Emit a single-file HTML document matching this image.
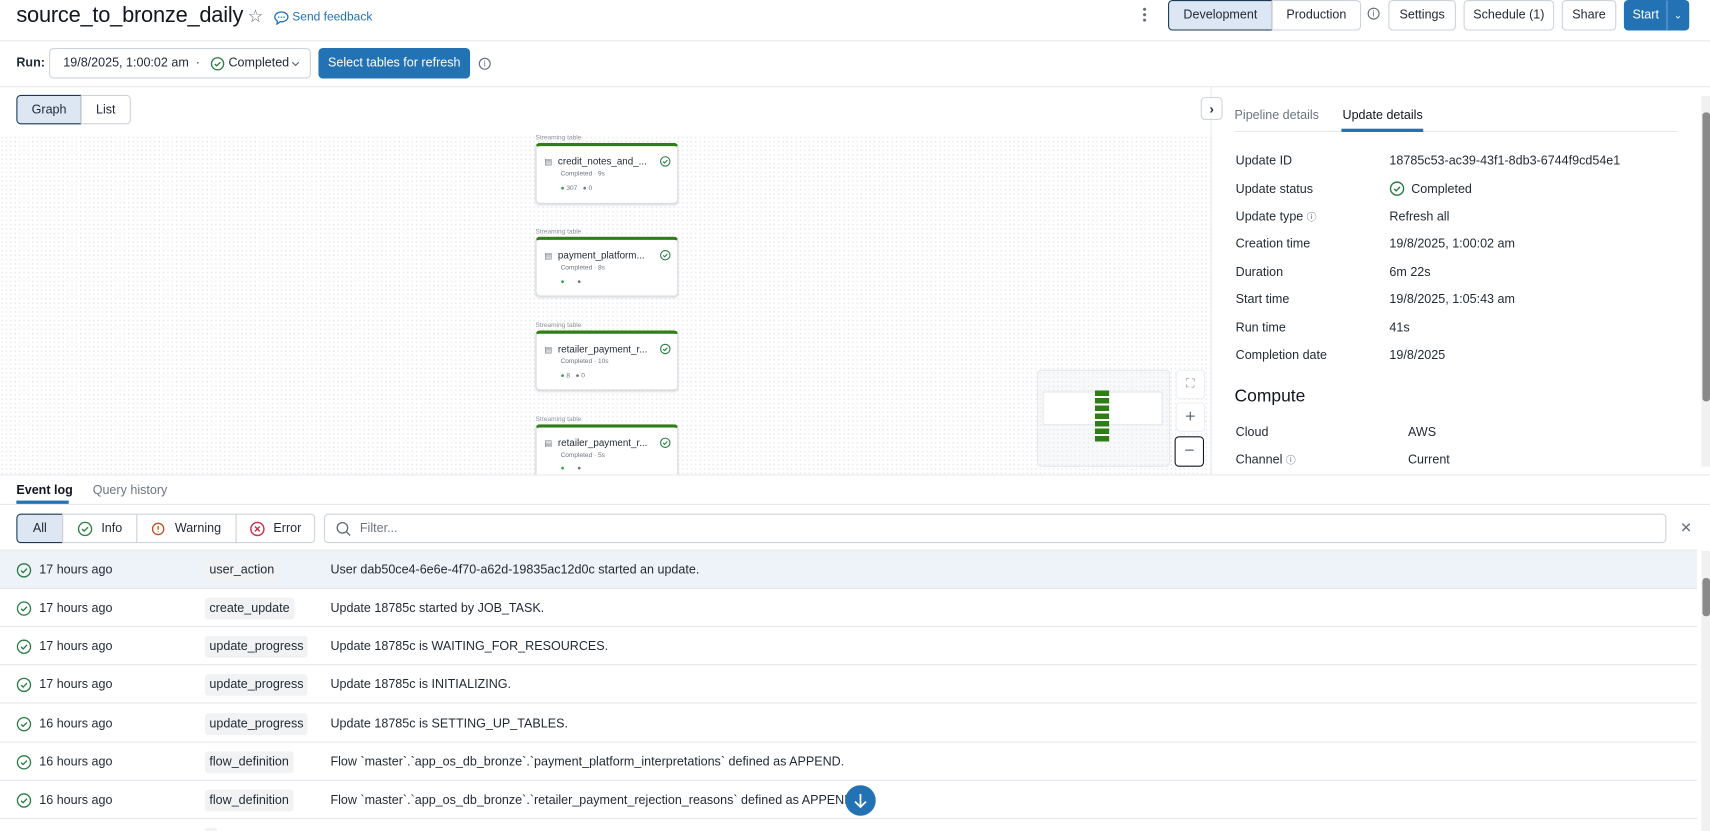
<!DOCTYPE html>
<html><head><meta charset="utf-8"><style>
*{box-sizing:border-box;margin:0;padding:0}
html,body{width:1710px;height:831px;overflow:hidden;background:#fff}
#w{width:1568px;height:762px;transform:scale(1.0906);transform-origin:0 0;position:relative;font-family:"Liberation Sans",sans-serif;font-size:11.5px;color:#1f2933}
.a{position:absolute}
.btn{position:absolute;border:1px solid #cdd3da;border-radius:4px;background:#fff;display:flex;align-items:center;justify-content:center;font-size:11.5px;color:#1f2933}
.hl{position:absolute;left:0;right:0;height:1px;background:#e6e9ed}
.dot{background-image:radial-gradient(#e3e6ea 0.6px,transparent 0.7px);background-size:4px 4px}
.card{position:absolute;left:491px;width:131px;background:#fff;border:1px solid #d6dbe0;border-top:3px solid #2e7d16;border-radius:4px;box-shadow:0 1px 2px rgba(0,0,0,.12)}
.st{position:absolute;left:491px;font-size:6px;color:#8a939c}
.lbl{position:absolute;left:1133px;font-size:11.5px;color:#1f2933;line-height:14px;margin-top:1px}
.val{position:absolute;left:1274px;font-size:11.5px;color:#1f2933;line-height:14px;margin-top:1px}
.row{position:absolute;left:0;width:1556px;height:35px;border-bottom:1px solid #e3e7ec}
.row .t{position:absolute;left:36px;top:11px;line-height:14px}
.row .g{position:absolute;left:188px;top:8px;background:#f1f2f4;padding:3px 4px;border-radius:3px;line-height:14px}
.row .m{position:absolute;left:303px;top:11px;line-height:14px}
.row svg{position:absolute;left:15px;top:11px}
.nc{position:absolute;left:106px;top:1px}
</style></head><body><div id="w">
<div class="a" style="left:15px;top:3px;font-size:20px;letter-spacing:-0.2px;color:#11171c">source_to_bronze_daily</div>
<div class="a" style="left:227px;top:5px;font-size:16px;color:#5f6b76">☆</div>
<svg class="a" style="left:251px;top:10px" width="14" height="13" viewBox="0 0 14 13"><path d="M7 1C3.7 1 1 3 1 5.6c0 1.5.9 2.8 2.3 3.6L3 12l3-2.1c.3 0 .7.1 1 .1 3.3 0 6-2 6-4.5S10.3 1 7 1z" fill="none" stroke="#2272b4" stroke-width="1.2"/><circle cx="4.6" cy="5.7" r=".7" fill="#2272b4"/><circle cx="7" cy="5.7" r=".7" fill="#2272b4"/><circle cx="9.4" cy="5.7" r=".7" fill="#2272b4"/></svg>
<div class="a" style="left:268px;top:10px;font-size:11px;color:#2272b4">Send feedback</div>
<div class="a" style="left:1048px;top:6px;width:3px;height:14px;background:radial-gradient(circle,#5f6b76 1.3px,transparent 1.5px) 0 0/3px 5px"></div>
<div class="btn" style="left:1071px;top:0;width:96px;height:28px;background:#dce7f3;border-color:#1b3a57;border-radius:4px 0 0 4px">Development</div>
<div class="btn" style="left:1166px;top:0;width:82px;height:28px;border-radius:0 4px 4px 0">Production</div>
<div class="a" style="left:1254px;top:7px;width:11px;height:11px;border:1px solid #5f6b76;border-radius:50%;font-size:8px;text-align:center;line-height:9px;color:#5f6b76">i</div>
<div class="btn" style="left:1273px;top:0;width:62px;height:28px">Settings</div>
<div class="btn" style="left:1342px;top:0;width:83px;height:28px">Schedule (1)</div>
<div class="btn" style="left:1432px;top:0;width:50px;height:28px">Share</div>
<div class="btn" style="left:1489px;top:0;width:40px;height:28px;background:#2272b4;border-color:#2272b4;color:#fff;border-radius:4px 0 0 4px">Start</div>
<div class="btn" style="left:1528px;top:0;width:21px;height:28px;background:#2272b4;border-color:#2272b4;border-left:1px solid #7aa7d2;color:#fff;border-radius:0 4px 4px 0;font-size:9px">⌄</div>
<div class="hl" style="top:37px"></div>
<div class="a" style="left:15px;top:52px;font-weight:bold;font-size:11.5px">Run:</div>
<div class="btn" style="left:45px;top:44px;width:240px;height:28px;justify-content:flex-start;padding-left:12px">19/8/2025, 1:00:02 am &nbsp;·&nbsp;
<svg width="13" height="13" viewBox="0 0 14 14" style="margin:0 4px 0 6px"><circle cx="7" cy="7" r="6" fill="none" stroke="#277c43" stroke-width="1.3"/><path d="M4.3 7.2l1.9 1.8 3.5-3.6" fill="none" stroke="#277c43" stroke-width="1.3"/></svg>Completed<svg style="position:absolute;right:9px;top:11px" width="8" height="5" viewBox="0 0 8 5"><path d="M1 1l3 3 3-3" fill="none" stroke="#5f6b76" stroke-width="1.1"/></svg></div>
<div class="btn" style="left:292px;top:44px;width:139px;height:28px;background:#2272b4;border-color:#2272b4;color:#fff">Select tables for refresh</div>
<div class="a" style="left:439px;top:53px;width:11px;height:11px;border:1px solid #5f6b76;border-radius:50%;font-size:8px;text-align:center;line-height:9px;color:#5f6b76">i</div>
<div class="hl" style="top:79px"></div>
<div class="a dot" style="left:0;top:124px;width:1110px;height:311px"></div>
<div class="btn" style="left:15px;top:87px;width:60px;height:27px;background:#dce7f3;border-color:#1b3a57;border-radius:4px 0 0 4px">Graph</div>
<div class="btn" style="left:74px;top:87px;width:46px;height:27px;border-radius:0 4px 4px 0">List</div>
<div class="a" style="left:1110px;top:79px;width:1px;height:356px;background:#e6e9ed"></div>
<div class="st" style="top:124px">Streaming table</div>
<div class="card" style="top:131px;height:56px"></div>
<div class="st" style="top:210px">Streaming table</div>
<div class="card" style="top:217px;height:55px"></div>
<div class="st" style="top:296px">Streaming table</div>
<div class="card" style="top:303px;height:55px"></div>
<div class="st" style="top:382px">Streaming table</div>
<div class="card" style="top:389px;height:50px;border-bottom:none"></div>
<div class="a" style="left:0;top:435px;width:1110px;height:6px;background:#fff"></div>
<div class="a" style="left:499px;top:142px;width:120px;font-size:9px;line-height:12px"><span style="color:#6b7580;font-size:8px">▤</span>&nbsp; credit_notes_and_...<svg class="nc" width="10" height="10" viewBox="0 0 14 14"><circle cx="7" cy="7" r="6" fill="none" stroke="#277c43" stroke-width="1.4"/><path d="M4.3 7.2l1.9 1.8 3.5-3.6" fill="none" stroke="#277c43" stroke-width="1.4"/></svg></div>
<div class="a" style="left:514px;top:157px;font-size:6px;color:#6b7580">Completed · 9s</div>
<div class="a" style="left:514px;top:170px;font-size:6px;color:#6b7580"><span style="color:#2f9e44">●</span> 307 &nbsp; <span style="color:#6b7580">●</span> 0</div>
<div class="a" style="left:499px;top:228px;width:120px;font-size:9px;line-height:12px"><span style="color:#6b7580;font-size:8px">▤</span>&nbsp; payment_platform...<svg class="nc" width="10" height="10" viewBox="0 0 14 14"><circle cx="7" cy="7" r="6" fill="none" stroke="#277c43" stroke-width="1.4"/><path d="M4.3 7.2l1.9 1.8 3.5-3.6" fill="none" stroke="#277c43" stroke-width="1.4"/></svg></div>
<div class="a" style="left:514px;top:243px;font-size:6px;color:#6b7580">Completed · 8s</div>
<div class="a" style="left:514px;top:256px;font-size:6px;color:#6b7580"><span style="color:#2f9e44">●</span> &nbsp; &nbsp; &nbsp; <span>●</span></div>
<div class="a" style="left:499px;top:314px;width:120px;font-size:9px;line-height:12px"><span style="color:#6b7580;font-size:8px">▤</span>&nbsp; retailer_payment_r...<svg class="nc" width="10" height="10" viewBox="0 0 14 14"><circle cx="7" cy="7" r="6" fill="none" stroke="#277c43" stroke-width="1.4"/><path d="M4.3 7.2l1.9 1.8 3.5-3.6" fill="none" stroke="#277c43" stroke-width="1.4"/></svg></div>
<div class="a" style="left:514px;top:329px;font-size:6px;color:#6b7580">Completed · 10s</div>
<div class="a" style="left:514px;top:342px;font-size:6px;color:#6b7580"><span style="color:#2f9e44">●</span> 8 &nbsp; <span>●</span> 0</div>
<div class="a" style="left:499px;top:400px;width:120px;font-size:9px;line-height:12px"><span style="color:#6b7580;font-size:8px">▤</span>&nbsp; retailer_payment_r...<svg class="nc" width="10" height="10" viewBox="0 0 14 14"><circle cx="7" cy="7" r="6" fill="none" stroke="#277c43" stroke-width="1.4"/><path d="M4.3 7.2l1.9 1.8 3.5-3.6" fill="none" stroke="#277c43" stroke-width="1.4"/></svg></div>
<div class="a" style="left:514px;top:415px;font-size:6px;color:#6b7580">Completed · 5s</div>
<div class="a" style="left:514px;top:427px;font-size:6px;color:#6b7580"><span style="color:#2f9e44">●</span> &nbsp; &nbsp; &nbsp; <span>●</span></div>
<div class="a dot" style="left:951px;top:339px;width:122px;height:89px;border:1px solid #e3e6ea;border-radius:4px;background-color:#f8f9fa"></div>
<div class="a" style="left:956px;top:359px;width:110px;height:31px;border:1px solid #e3e6ea;background:#fff"></div>
<div class="a" style="left:1004px;top:358px;width:13px;height:48px;background:repeating-linear-gradient(#2e7d16 0 5px,transparent 5px 7px)"></div>
<div class="btn" style="left:1078px;top:339px;width:27px;height:27px;border-color:#eceff2;color:#8a939c;font-size:11px">⛶</div>
<div class="btn" style="left:1078px;top:369px;width:27px;height:27px;border-color:#eceff2;color:#5f6b76;font-size:16px">+</div>
<div class="btn" style="left:1077px;top:400px;width:27px;height:28px;border:1.5px solid #11171c;color:#5f6b76;font-size:16px">−</div>
<div class="btn" style="left:1101px;top:89px;width:20px;height:21px;font-weight:bold;font-size:12px">›</div>
<div class="a" style="left:1132px;top:100px;color:#6b7580">Pipeline details</div>
<div class="a" style="left:1231px;top:100px;color:#11171c">Update details</div>
<div class="a" style="left:1132px;top:120px;width:406px;height:1px;background:#e6e9ed"></div>
<div class="a" style="left:1230px;top:118px;width:75px;height:3px;background:#2272b4"></div>
<div class="lbl" style="top:140px">Update ID</div><div class="val" style="top:140px">18785c53-ac39-43f1-8db3-6744f9cd54e1</div>
<div class="lbl" style="top:166px">Update status</div><div class="val" style="top:165px"><svg width="14" height="14" viewBox="0 0 14 14" style="vertical-align:-3px;margin-right:6px"><circle cx="7" cy="7" r="6" fill="none" stroke="#277c43" stroke-width="1.3"/><path d="M4.3 7.2l1.9 1.8 3.5-3.6" fill="none" stroke="#277c43" stroke-width="1.3"/></svg>Completed</div>
<div class="lbl" style="top:191px">Update type <span style="font-size:9px;color:#5f6b76">ⓘ</span></div><div class="val" style="top:191px">Refresh all</div>
<div class="lbl" style="top:216px">Creation time</div><div class="val" style="top:216px">19/8/2025, 1:00:02 am</div>
<div class="lbl" style="top:242px">Duration</div><div class="val" style="top:242px">6m 22s</div>
<div class="lbl" style="top:267px">Start time</div><div class="val" style="top:267px">19/8/2025, 1:05:43 am</div>
<div class="lbl" style="top:293px">Run time</div><div class="val" style="top:293px">41s</div>
<div class="lbl" style="top:318px">Completion date</div><div class="val" style="top:318px">19/8/2025</div>
<div class="a" style="left:1132px;top:355px;font-size:16px;color:#11171c">Compute</div>
<div class="lbl" style="top:389px">Cloud</div><div class="val" style="left:1291px;top:389px">AWS</div>
<div class="lbl" style="top:414px">Channel <span style="font-size:9px;color:#5f6b76">ⓘ</span></div><div class="val" style="left:1291px;top:414px">Current</div>
<div class="a" style="left:1560px;top:88px;width:8px;height:340px;background:#f1f1f1"></div>
<div class="a" style="left:1561px;top:103px;width:7px;height:265px;background:#8a8a8a;border-radius:3px"></div>
<div class="hl" style="top:435px"></div>
<div class="a" style="left:15px;top:444px;font-weight:bold;color:#11171c">Event log</div>
<div class="a" style="left:85px;top:444px;color:#6b7580">Query history</div>
<div class="hl" style="top:462px"></div>
<div class="a" style="left:15px;top:459px;width:48px;height:3px;background:#2272b4"></div>
<div class="btn" style="left:15px;top:471px;width:43px;height:27px;background:#dce7f3;border-color:#1b3a57;border-radius:4px 0 0 4px">All</div>
<div class="btn" style="left:57px;top:471px;width:69px;height:27px;border-radius:0"><svg width="14" height="14" viewBox="0 0 14 14" style="margin-right:8px"><circle cx="7" cy="7" r="6" fill="none" stroke="#277c43" stroke-width="1.2"/><path d="M4.3 7.2l1.9 1.8 3.5-3.6" fill="none" stroke="#277c43" stroke-width="1.2"/></svg>Info</div>
<div class="btn" style="left:125px;top:471px;width:92px;height:27px;border-radius:0"><svg width="12" height="12" viewBox="0 0 14 14" style="margin-right:9px"><circle cx="7" cy="7" r="6" fill="none" stroke="#be501e" stroke-width="1.4"/><path d="M7 3.8v4M7 9.6v.8" stroke="#be501e" stroke-width="1.4"/></svg>Warning</div>
<div class="btn" style="left:216px;top:471px;width:73px;height:27px;border-radius:0 4px 4px 0"><svg width="14" height="14" viewBox="0 0 14 14" style="margin-right:8px"><circle cx="7" cy="7" r="6" fill="none" stroke="#c82d4c" stroke-width="1.3"/><path d="M4.8 4.8l4.4 4.4M9.2 4.8l-4.4 4.4" stroke="#c82d4c" stroke-width="1.3"/></svg>Error</div>
<div class="btn" style="left:297px;top:471px;width:1231px;height:27px;justify-content:flex-start;padding-left:10px;color:#6b7580"><svg width="14" height="14" viewBox="0 0 14 14" style="margin-right:8px"><circle cx="6" cy="6" r="4.8" fill="none" stroke="#5f6b76" stroke-width="1.2"/><path d="M9.5 9.5l3.5 3.5" stroke="#5f6b76" stroke-width="1.2"/></svg>Filter...</div>
<div class="a" style="left:1541px;top:474px;font-size:17px;color:#5f6b76">×</div>
<div class="a" style="left:0;top:504px;width:1556px;height:1px;background:#e3e7ec"></div>
<div class="row" style="top:505px;background:#eef2f9"><svg width="14" height="14" viewBox="0 0 14 14"><circle cx="7" cy="7" r="6" fill="none" stroke="#277c43" stroke-width="1.2"/><path d="M4.3 7.2l1.9 1.8 3.5-3.6" fill="none" stroke="#277c43" stroke-width="1.2"/></svg><span class="t">17 hours ago</span><span class="g">user_action</span><span class="m">User dab50ce4-6e6e-4f70-a62d-19835ac12d0c started an update.</span></div>
<div class="row" style="top:540px"><svg width="14" height="14" viewBox="0 0 14 14"><circle cx="7" cy="7" r="6" fill="none" stroke="#277c43" stroke-width="1.2"/><path d="M4.3 7.2l1.9 1.8 3.5-3.6" fill="none" stroke="#277c43" stroke-width="1.2"/></svg><span class="t">17 hours ago</span><span class="g">create_update</span><span class="m">Update 18785c started by JOB_TASK.</span></div>
<div class="row" style="top:575px"><svg width="14" height="14" viewBox="0 0 14 14"><circle cx="7" cy="7" r="6" fill="none" stroke="#277c43" stroke-width="1.2"/><path d="M4.3 7.2l1.9 1.8 3.5-3.6" fill="none" stroke="#277c43" stroke-width="1.2"/></svg><span class="t">17 hours ago</span><span class="g">update_progress</span><span class="m">Update 18785c is WAITING_FOR_RESOURCES.</span></div>
<div class="row" style="top:610px"><svg width="14" height="14" viewBox="0 0 14 14"><circle cx="7" cy="7" r="6" fill="none" stroke="#277c43" stroke-width="1.2"/><path d="M4.3 7.2l1.9 1.8 3.5-3.6" fill="none" stroke="#277c43" stroke-width="1.2"/></svg><span class="t">17 hours ago</span><span class="g">update_progress</span><span class="m">Update 18785c is INITIALIZING.</span></div>
<div class="row" style="top:646px"><svg width="14" height="14" viewBox="0 0 14 14"><circle cx="7" cy="7" r="6" fill="none" stroke="#277c43" stroke-width="1.2"/><path d="M4.3 7.2l1.9 1.8 3.5-3.6" fill="none" stroke="#277c43" stroke-width="1.2"/></svg><span class="t">16 hours ago</span><span class="g">update_progress</span><span class="m">Update 18785c is SETTING_UP_TABLES.</span></div>
<div class="row" style="top:681px"><svg width="14" height="14" viewBox="0 0 14 14"><circle cx="7" cy="7" r="6" fill="none" stroke="#277c43" stroke-width="1.2"/><path d="M4.3 7.2l1.9 1.8 3.5-3.6" fill="none" stroke="#277c43" stroke-width="1.2"/></svg><span class="t">16 hours ago</span><span class="g">flow_definition</span><span class="m">Flow `master`.`app_os_db_bronze`.`payment_platform_interpretations` defined as APPEND.</span></div>
<div class="row" style="top:716px"><svg width="14" height="14" viewBox="0 0 14 14"><circle cx="7" cy="7" r="6" fill="none" stroke="#277c43" stroke-width="1.2"/><path d="M4.3 7.2l1.9 1.8 3.5-3.6" fill="none" stroke="#277c43" stroke-width="1.2"/></svg><span class="t">16 hours ago</span><span class="g">flow_definition</span><span class="m">Flow `master`.`app_os_db_bronze`.`retailer_payment_rejection_reasons` defined as APPEND.</span></div>
<div class="row" style="top:751px"><span class="g">&nbsp;</span></div>
<div class="a" style="left:775px;top:720px;width:28px;height:28px;border-radius:50%;background:#2272b4"><svg width="28" height="28" viewBox="0 0 28 28"><path d="M14 8v12M9 15l5 5 5-5" fill="none" stroke="#fff" stroke-width="1.6"/></svg></div>
<div class="a" style="left:1560px;top:505px;width:8px;height:257px;background:#f1f1f1"></div>
<div class="a" style="left:1561px;top:530px;width:7px;height:35px;background:#8a8a8a;border-radius:3px"></div>
</div></body></html>
